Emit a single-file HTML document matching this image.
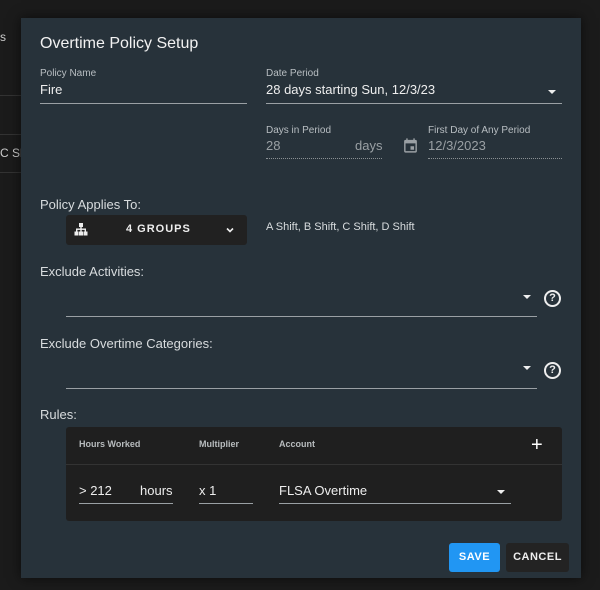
<!DOCTYPE html>
<html><head><style>
*{margin:0;padding:0;box-sizing:border-box}
body{width:600px;height:590px;background:#1b1b1b;font-family:"Liberation Sans",sans-serif;color:#e8e8e8;position:relative;overflow:hidden}
.a{position:absolute}
.dlg{left:21px;top:18px;width:560px;height:560px;background:#27323a;box-shadow:0 0 12px rgba(0,0,0,.6)}
.lbl{font-size:10px;color:#b8bec2}
.val{font-size:13px;color:#eee}
.line{height:1px;background:#9aa0a4}
.dot{border-bottom:1px dotted #8a9094}
.h{font-size:13px;color:#d8dcde}
.q{width:17px;height:17px;border:2px solid #eee;border-radius:50%;font-size:11px;font-weight:bold;text-align:center;line-height:13px;color:#eee}
.tri{width:0;height:0;border-left:4px solid transparent;border-right:4px solid transparent;border-top:4px solid #eee}
</style></head><body>
<div class="a" style="left:0;top:95px;width:21px;height:1px;background:#333"></div>
<div class="a" style="left:0;top:134px;width:21px;height:1px;background:#333"></div>
<div class="a" style="left:0;top:172px;width:21px;height:1px;background:#333"></div>
<div class="a" style="left:0;top:146px;font-size:12px;color:#ccc">C Shi</div>
<div class="a" style="left:0;top:30px;font-size:12px;color:#ccc">s</div>
<div class="a dlg"></div>
<div class="a" style="left:40px;top:35px;font-size:16px;color:#f2f2f2">Overtime Policy Setup</div>
<div class="a lbl" style="left:40px;top:68px">Policy Name</div>
<div class="a val" style="left:40px;top:82px">Fire</div>
<div class="a line" style="left:40px;top:103px;width:207px"></div>
<div class="a lbl" style="left:266px;top:68px">Date Period</div>
<div class="a val" style="left:266px;top:82px">28 days starting Sun, 12/3/23</div>
<div class="a tri" style="left:548px;top:90px"></div>
<div class="a line" style="left:266px;top:103px;width:296px"></div>
<div class="a lbl" style="left:266px;top:125px">Days in Period</div>
<div class="a val" style="left:266px;top:138px;color:#9aa0a4">28</div>
<div class="a val" style="left:355px;top:138px;color:#9aa0a4">days</div>
<div class="a dot" style="left:266px;top:158px;width:116px"></div>
<svg class="a" style="left:402px;top:137px" width="17" height="17" viewBox="0 0 24 24"><path fill="#9aa0a4" d="M19 4h-1V2h-2v2H8V2H6v2H5a2 2 0 0 0-2 2v14a2 2 0 0 0 2 2h14a2 2 0 0 0 2-2V6a2 2 0 0 0-2-2zm0 16H5V9h14zM12 13h5v5h-5z"/></svg>
<div class="a lbl" style="left:428px;top:125px">First Day of Any Period</div>
<div class="a val" style="left:428px;top:138px;color:#9aa0a4">12/3/2023</div>
<div class="a dot" style="left:428px;top:158px;width:134px"></div>
<div class="a h" style="left:40px;top:197px">Policy Applies To:</div>
<div class="a" style="left:66px;top:215px;width:181px;height:30px;background:#212121;border-radius:3px"></div>
<svg class="a" style="left:74px;top:222px" width="14" height="14" viewBox="0 0 14 14"><g fill="#eee"><rect x="5" y="1" width="4" height="4"/><rect x="6.3" y="5" width="1.4" height="2"/><rect x="2" y="6.5" width="10" height="1.4"/><rect x="2" y="6.5" width="1.4" height="3"/><rect x="10.6" y="6.5" width="1.4" height="3"/><rect x="6.3" y="6.5" width="1.4" height="3"/><rect x="0.5" y="9.5" width="4" height="4"/><rect x="5" y="9.5" width="4" height="4"/><rect x="9.5" y="9.5" width="4" height="4"/></g></svg>
<div class="a" style="left:126px;top:223px;font-size:11px;font-weight:bold;letter-spacing:1px;color:#eee">4 GROUPS</div>
<svg class="a" style="left:225px;top:225px" width="10" height="10" viewBox="0 0 10 10"><path d="M2 3.5l3 3 3-3" stroke="#eee" stroke-width="1.6" fill="none"/></svg>
<div class="a" style="left:266px;top:221px;font-size:11px;color:#d8dcde">A Shift, B Shift, C Shift, D Shift</div>
<div class="a h" style="left:40px;top:264px">Exclude Activities:</div>
<div class="a tri" style="left:523px;top:295px"></div>
<div class="a line" style="left:66px;top:316px;width:471px"></div>
<div class="a q" style="left:544px;top:290px">?</div>
<div class="a h" style="left:40px;top:336px">Exclude Overtime Categories:</div>
<div class="a tri" style="left:523px;top:366px"></div>
<div class="a line" style="left:66px;top:388px;width:471px"></div>
<div class="a q" style="left:544px;top:362px">?</div>
<div class="a h" style="left:40px;top:407px">Rules:</div>
<div class="a" style="left:66px;top:427px;width:496px;height:94px;background:#1f1f1f;border-radius:3px"></div>
<div class="a" style="left:66px;top:464px;width:496px;height:1px;background:#333"></div>
<div class="a" style="left:79px;top:439px;font-size:9px;font-weight:bold;color:#b8bcbe">Hours Worked</div>
<div class="a" style="left:199px;top:439px;font-size:9px;font-weight:bold;color:#b8bcbe">Multiplier</div>
<div class="a" style="left:279px;top:439px;font-size:9px;font-weight:bold;color:#b8bcbe">Account</div>
<div class="a" style="left:531px;top:434px;font-size:20px;color:#fff">+</div>
<div class="a val" style="left:79px;top:483px">&gt; 212</div>
<div class="a val" style="left:140px;top:483px">hours</div>
<div class="a line" style="left:79px;top:503px;width:94px"></div>
<div class="a val" style="left:199px;top:483px">x 1</div>
<div class="a line" style="left:199px;top:503px;width:54px"></div>
<div class="a val" style="left:279px;top:483px">FLSA Overtime</div>
<div class="a tri" style="left:497px;top:490px"></div>
<div class="a line" style="left:279px;top:503px;width:232px"></div>
<div class="a" style="left:449px;top:543px;width:51px;height:29px;background:#2196f3;border-radius:3px;font-size:11px;font-weight:bold;color:#fff;text-align:center;line-height:29px;letter-spacing:.5px">SAVE</div>
<div class="a" style="left:506px;top:543px;width:63px;height:29px;background:#232323;border-radius:3px;font-size:11px;font-weight:bold;color:#eee;text-align:center;line-height:29px;letter-spacing:.5px">CANCEL</div>
</body></html>
